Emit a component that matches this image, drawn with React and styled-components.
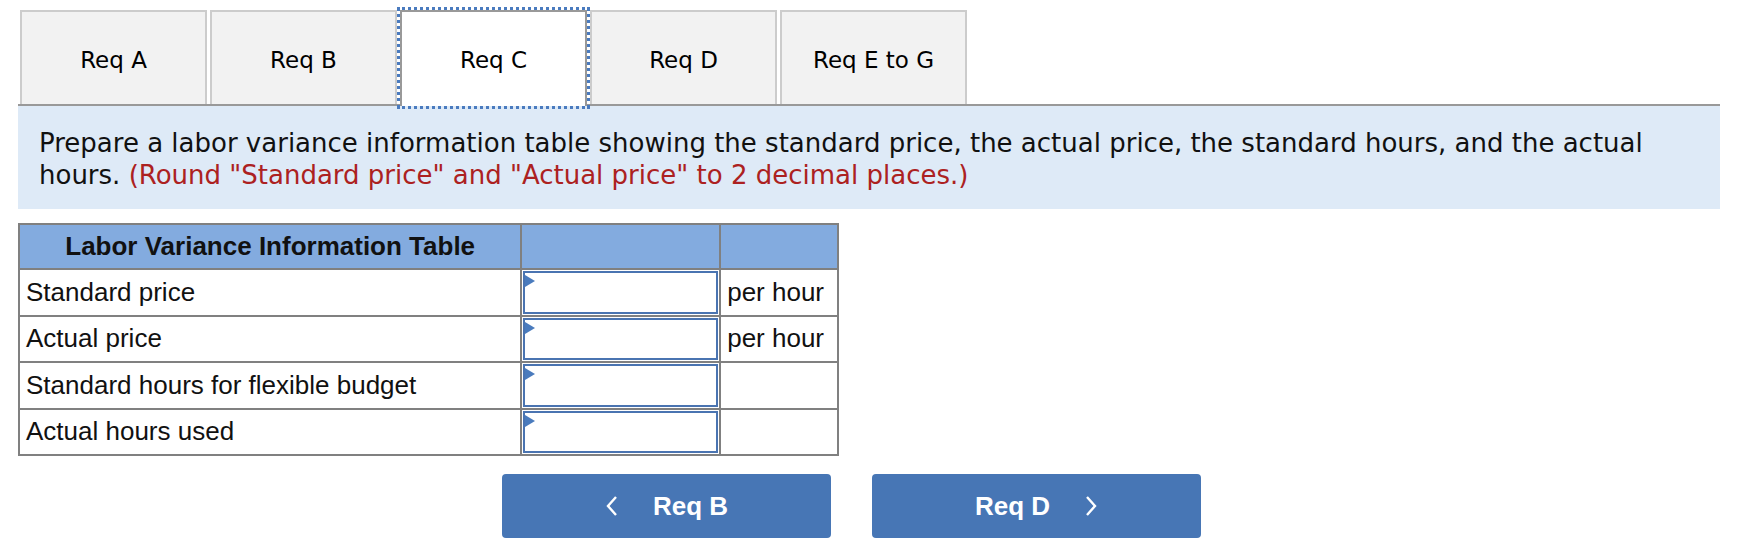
import React from 'react';
import styled, { createGlobalStyle } from 'styled-components';

const GlobalStyle = createGlobalStyle`
  body {
    margin: 0;
    background: #fff;
  }
`;

const Page = styled.div`
  padding: 10px 22px 0 18px;
`;

const TabBar = styled.div`
  display: flex;
  gap: 3px;
  padding-left: 2px;
  border-bottom: 2px solid #999;
`;

const Tab = styled.div`
  box-sizing: border-box;
  width: 187px;
  height: ${(p) => (p.$active ? '96px' : '94px')};
  margin-bottom: ${(p) => (p.$active ? '-2px' : '0')};
  padding: 4px 0 ${(p) => (p.$active ? '2px' : '0')};
  display: flex;
  align-items: center;
  justify-content: center;
  background: ${(p) => (p.$active ? '#fff' : '#f2f2f2')};
  border: 2px solid ${(p) => (p.$active ? '#999' : '#ccc')};
  border-bottom: none;
  outline: ${(p) => (p.$active ? '3px dotted #4a7bbf' : 'none')};
  outline-offset: 0;
  position: relative;
  z-index: ${(p) => (p.$active ? 1 : 0)};
  font-family: "DejaVu Sans", Verdana, sans-serif;
  font-size: 23px;
  color: #000;
`;

const Panel = styled.div`
  background: #deeaf7;
  padding: 21px 21px 18px;
  font-family: "DejaVu Sans", Tahoma, sans-serif;
  font-size: 26px;
  line-height: 32px;
  color: #111;
`;

const Note = styled.span`
  color: #ac2121;
`;

const Table = styled.table`
  margin-top: 14px;
  border-collapse: collapse;
  width: 821px;
  font-family: "Liberation Sans", Arial, sans-serif;
  font-size: 26px;
  color: #111;
`;

const HeadCell = styled.th`
  background: #83abdf;
  border: 2px solid #808080;
  height: 43px;
  padding: 0;
  font-weight: bold;
  text-align: center;
  width: ${(p) => p.$w};
`;

const Cell = styled.td`
  border: 2px solid #808080;
  height: 42px;
  padding: 0 6px;
  text-align: left;
  white-space: nowrap;
`;

const InputCell = styled.td`
  border: 2px solid #808080;
  height: 42px;
  padding: 1px;
`;

const Field = styled.div`
  box-sizing: border-box;
  height: 42.5px;
  border: 2px solid #4a74b1;
  background: #fff;
  position: relative;

  &::before {
    content: '';
    position: absolute;
    left: 0;
    top: 2px;
    border-top: 6px solid transparent;
    border-bottom: 6px solid transparent;
    border-left: 10px solid #4a7bbd;
  }
`;

const NavRow = styled.div`
  display: flex;
  gap: 41px;
  margin-top: 18px;
  padding-left: 484px;
`;

const NavButton = styled.button`
  box-sizing: border-box;
  width: 329px;
  height: 64px;
  display: flex;
  align-items: center;
  justify-content: center;
  gap: 34px;
  background: #4776b5;
  border: none;
  border-radius: 4px;
  color: #fff;
  font-family: "Liberation Sans", Arial, sans-serif;
  font-weight: bold;
  font-size: 26px;
  padding: 0;
`;

const Chevron = ({ dir }) => (
  <svg width="14" height="22" viewBox="0 0 14 22">
    <polyline
      points={dir === 'left' ? '11,2 3,11 11,20' : '3,2 11,11 3,20'}
      fill="none"
      stroke="#fff"
      strokeWidth="2.4"
    />
  </svg>
);

const tabs = ['Req A', 'Req B', 'Req C', 'Req D', 'Req E to G'];

const rows = [
  { label: 'Standard price', unit: 'per hour' },
  { label: 'Actual price', unit: 'per hour' },
  { label: 'Standard hours for flexible budget', unit: '' },
  { label: 'Actual hours used', unit: '' },
];

export default function App() {
  return (
    <>
      <GlobalStyle />
      <Page>
        <TabBar>
          {tabs.map((t) => (
            <Tab key={t} $active={t === 'Req C'}>
              {t}
            </Tab>
          ))}
        </TabBar>

        <Panel>
          Prepare a labor variance information table showing the standard price, the actual price, the standard hours, and the actual hours.{' '}
          <Note>(Round "Standard price" and "Actual price" to 2 decimal places.)</Note>
        </Panel>

        <Table>
          <thead>
            <tr>
              <HeadCell $w="503px">Labor Variance Information Table</HeadCell>
              <HeadCell $w="202px" />
              <HeadCell $w="116px" />
            </tr>
          </thead>
          <tbody>
            {rows.map((r) => (
              <tr key={r.label}>
                <Cell>{r.label}</Cell>
                <InputCell>
                  <Field />
                </InputCell>
                <Cell>{r.unit}</Cell>
              </tr>
            ))}
          </tbody>
        </Table>

        <NavRow>
          <NavButton>
            <Chevron dir="left" />
            <span>Req B</span>
          </NavButton>
          <NavButton>
            <span>Req D</span>
            <Chevron dir="right" />
          </NavButton>
        </NavRow>
      </Page>
    </>
  );
}
